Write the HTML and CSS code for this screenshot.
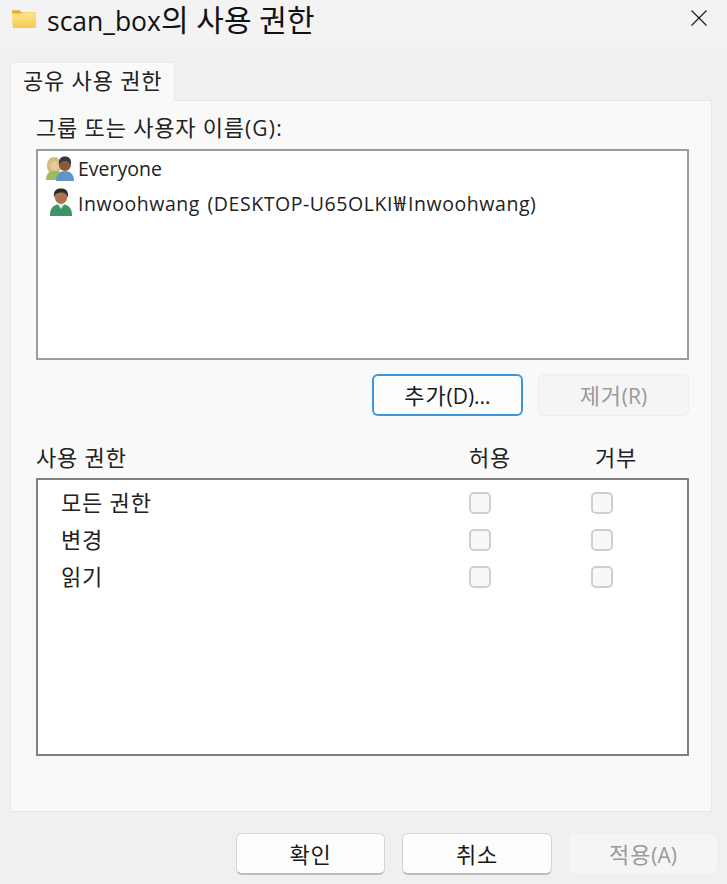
FILE: index.html
```html
<!DOCTYPE html>
<html lang="ko">
<head>
<meta charset="utf-8">
<title>scan_box의 사용 권한</title>
<link rel="stylesheet" href="styles.css">
</head>
<body>
<div class="dialog">
  <header class="titlebar">
    <svg class="folder" width="24" height="18" viewBox="0 0 25 20" preserveAspectRatio="none">
      <defs><linearGradient id="fg" x1="0" y1="0" x2="0" y2="1"><stop offset="0" stop-color="#fde68f"/><stop offset="1" stop-color="#f6c94f"/></linearGradient></defs>
      <path d="M0 1.500C0 .7.5.3 1.200.3H7.600L10 2.600H24c.6 0 .9.3.9.9V4.500H0Z" fill="#e9a92c"/>
      <path d="M0 4H9.500L11 2.800H25V19c0 .5-.4.9-.9.9H.9C.4 19.900 19.500 0 19Z" fill="url(#fg)"/>
    </svg>
    <h1 class="title"><span class="lat">scan_box</span>의 사용 권한</h1>
    <svg class="close" width="16" height="16" viewBox="0 0 16 16"><path d="M.5.5 15.500 15.500M15.500.5 .5 15.500" stroke="#1a1a1a" stroke-width="1.200" fill="none"/></svg>
  </header>
  <div class="body">
    <div class="tabs"><div class="tab">공유 사용 권한</div></div>
    <section class="panel">
      <div class="label">그룹 또는 사용자 이름<span class="lat">(G):</span></div>
      <div class="listbox">
        <div class="user">
          <svg class="uicon" width="30" height="26" viewBox="0 0 30 26">
            <defs><filter id="soft"><feGaussianBlur stdDeviation="0.45"/></filter></defs>
            <g filter="url(#soft)">
              <path d="M2 10c0-6 3-9 7-9s7 3 7 9c0 3-1 5-2 6H4C3 15 2 13 2 10Z" fill="#d6bd7f"/>
              <ellipse cx="9.500" cy="10" rx="4.200" ry="5" fill="#e7c9a0"/>
              <path d="M1 24c0-6 3-9 8-9s7 2 8 5v4Z" fill="#9dbb5f"/>
              <circle cx="20" cy="9" r="6" fill="#8a5a3a"/>
              <path d="M14 9C13 2 17 .5 20 .5S27 2 26 9C24.500 5.500 22 5 20 5s-4.500.5-6 4Z" fill="#2f3a44"/>
              <path d="M11 25c0-7 4-10 9-10s9 3 9 10Z" fill="#5f95c9"/>
            </g>
          </svg>
          <span class="name">Everyone</span>
        </div>
        <div class="user">
          <svg class="uicon" width="30" height="30" viewBox="0 0 30 30">
            <g filter="url(#soft)">
              <ellipse cx="16" cy="10" rx="6.200" ry="7" fill="#a8754f"/>
              <path d="M9 11C8 3 12 1.500 16 1.500S24 3 23 11c-1-4-3-5.500-7-5.500S10 7 9 11Z" fill="#2b2a26"/>
              <path d="M5 29c-.5-8 4-12 11-12s11.500 4 11 12Z" fill="#3e9468"/>
              <path d="M12.500 17h7l-3.500 5Z" fill="#d7efe0"/>
            </g>
          </svg>
          <span class="name long">Inwoohwang (DESKTOP-U65OLKI<span class="won">₩</span>Inwoohwang)</span>
        </div>
      </div>
      <div class="listactions">
        <button class="btn focus">추가<span class="lat">(D)...</span></button>
        <button class="btn disabled">제거<span class="lat">(R)</span></button>
      </div>
      <div class="permhead">
        <span class="permname">사용 권한</span>
        <span class="col">허용</span>
        <span class="col">거부</span>
      </div>
      <div class="permbox">
        <div class="perm"><span class="permname">모든 권한</span><span class="cell"><i class="check"></i></span><span class="cell"><i class="check"></i></span></div>
        <div class="perm"><span class="permname">변경</span><span class="cell"><i class="check"></i></span><span class="cell"><i class="check"></i></span></div>
        <div class="perm"><span class="permname">읽기</span><span class="cell"><i class="check"></i></span><span class="cell"><i class="check"></i></span></div>
      </div>
    </section>
    <footer class="footer">
      <button class="btn raised">확인</button>
      <button class="btn raised">취소</button>
      <button class="btn disabled">적용<span class="lat">(A)</span></button>
    </footer>
  </div>
</div>
</body>
</html>
```

FILE: styles.css
```css
* { box-sizing: border-box; }
html, body { margin: 0; padding: 0; }
body {
  width: 727px;
  height: 884px;
  overflow: hidden;
  font-family: "Open Sans", "Noto Sans CJK KR", sans-serif;
  font-size: 22px;
  letter-spacing: 0.8px;
  color: #1a1a1a;
  background: #f0f0f0;
}
.lat { font-size: 21px; letter-spacing: 0; }
.label .lat { letter-spacing: 1.200px; }
.name { font-size: 19.5px; letter-spacing: 0; }
.long { letter-spacing: 0.55px; word-spacing: 2px; }
.won { font-family: "Noto Sans CJK KR", sans-serif; font-size: 21px; margin: 0 2px 0 1px; }
.dialog { display: flex; flex-direction: column; height: 884px; }
.titlebar {
  height: 48px;
  background: #f3f3f3;
  display: flex;
  align-items: center;
  padding: 0 20px 0 12px;
  flex: none;
}
.folder { margin-right: 11px; margin-top: -10px; flex: none; }
.title { margin: -7px 0 0; font-size: 30px; font-weight: 400; color: #111; line-height: 32px; flex: 1; letter-spacing: 0; }
.title .lat { font-size: 26.500px; }
.close { margin-top: -12px; flex: none; }
.body { flex: 1; display: flex; flex-direction: column; padding: 14px 15px 0 10px; }
.tabs { display: flex; height: 38px; flex: none; }
.tab {
  width: 165px;
  background: #f9f9f9;
  border: 1px solid #ebebeb;
  border-bottom: 0;
  padding-left: 12px;
  line-height: 34px;
  color: #222;
  position: relative;
  z-index: 1;
  margin-bottom: -1px;
}
.panel {
  height: 712px;
  flex: none;
  background: #f9f9f9;
  border: 1px solid #e6e6e6;
  padding: 12px 22px 0 25px;
  display: flex;
  flex-direction: column;
}
.label { height: 36px; line-height: 28px; color: #222; }
.listbox {
  height: 211px;
  background: #fff;
  border: 2px solid #9a9ca4;
  padding: 1px 0 0 7px;
  flex: none;
}
.user { display: flex; align-items: center; height: 33px; white-space: nowrap; color: #222; }
.uicon { flex: none; margin-right: 3px; }
.listactions { display: flex; justify-content: flex-end; gap: 15px; margin-top: 14px; flex: none; }
.btn {
  font: inherit;
  letter-spacing: inherit;
  width: 151px;
  height: 42px;
  border-radius: 6px;
  padding: 0 0 2px;
  color: #1a1a1a;
  background: #fdfdfd;
  border: 1px solid #d5d5d5;
  flex: none;
}
.btn.focus { border: 2px solid #3f95dc; background: #fdfdfd; }
.btn.disabled { background: #f5f5f5; border: 1px solid #eeeeee; color: #9a9a9a; }
.btn.raised { border-bottom: 2px solid #bdbdbd; }
.permhead { display: flex; align-items: flex-start; height: 36px; margin-top: 26px; flex: none; color: #222; line-height: 30px; }
.permname { flex: 1; }
.col { width: 126px; flex: none; }
.permhead .col:last-child { width: 94px; }
.permbox {
  height: 278px;
  flex: none;
  background: #fff;
  border: 2px solid #808080;
  padding: 4px 0 0 23px;
}
.perm { display: flex; align-items: center; height: 37px; color: #222; line-height: 36px; }
.perm .permname { align-self: flex-start; }
.cell { flex: none; width: 122px; display: flex; }
.perm .cell:last-child { width: 96px; }
.check {
  display: block;
  width: 22px;
  height: 22px;
  border-radius: 5px;
  background: #f8f8f8;
  border: 2px solid #cfcfcf;
}
.footer { display: flex; gap: 17px; padding: 21px 0 0 226px; flex: none; }
.footer .btn { width: 149px; }
.footer .btn:nth-child(2) { width: 150px; margin-right: -1px; }
.footer .btn.disabled { width: 150px; }
```
